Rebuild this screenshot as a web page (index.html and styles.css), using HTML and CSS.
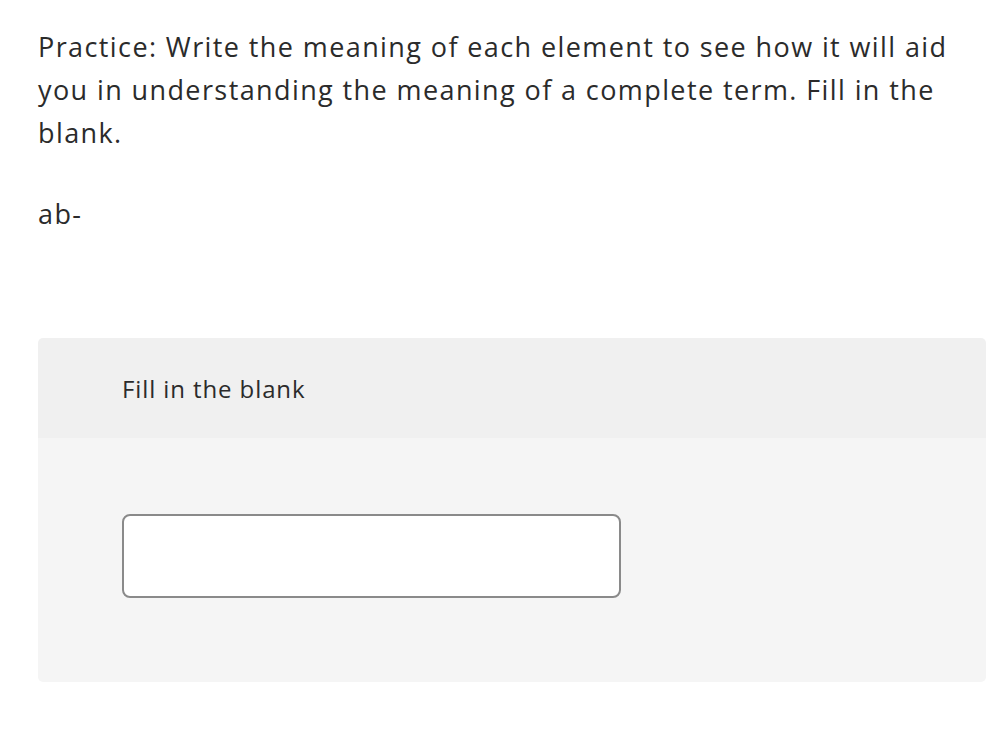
FILE: index.html
```html
<!DOCTYPE html>
<html lang="en">
<head>
  <meta charset="UTF-8" />
  <meta name="viewport" content="width=device-width, initial-scale=1.0" />
  <title>Practice</title>
  <link rel="stylesheet" href="styles.css">
</head>
<body>
  <div class="question">
    <p class="prompt">Practice: Write the meaning of each element to see how it will aid you in understanding the meaning of a complete term. Fill in the blank.</p>
    <p class="term">ab-</p>
    <div class="card">
      <div class="card-head">Fill in the blank</div>
      <div class="card-body">
        <input type="text" class="blank" aria-label="Fill in the blank" />
      </div>
    </div>
  </div>
</body>
</html>
```

FILE: styles.css
```css
* {
  margin: 0;
  padding: 0;
  box-sizing: border-box;
}
body {
  font-family: "Open Sans", sans-serif;
  color: #2b2b2b;
  background: #fff;
}
.question {
  padding: 25px 20px 0 38px;
}
.prompt {
  font-size: 27px;
  line-height: 43px;
  letter-spacing: 1.4px;
  max-width: 930px;
}
.term {
  font-size: 27px;
  line-height: 43px;
  letter-spacing: 1.4px;
  margin-top: 38px;
}
.card {
  margin-top: 103px;
  width: 948px;
  border-radius: 5px;
  overflow: hidden;
}
.card-head {
  height: 100px;
  background: #f0f0f0;
  display: flex;
  align-items: center;
  padding-left: 84px;
  font-size: 24px;
  letter-spacing: 0.9px;
}
.card-body {
  background: #f5f5f5;
  padding: 76px 84px 84px;
}
.blank {
  display: block;
  width: 499px;
  height: 84px;
  border: 2px solid #8a8a8a;
  border-radius: 8px;
  background: #fff;
  font: inherit;
  outline: none;
}
```
